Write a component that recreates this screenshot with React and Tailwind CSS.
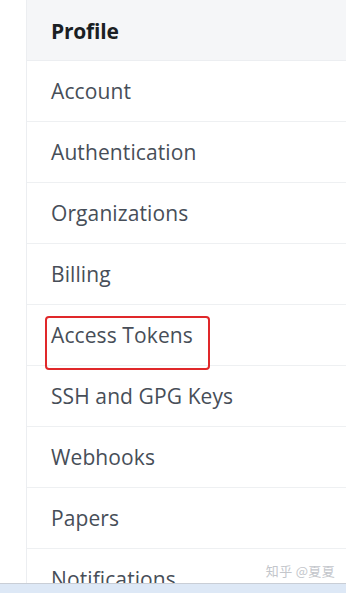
const items = [
  "Account",
  "Authentication",
  "Organizations",
  "Billing",
  "Access Tokens",
  "SSH and GPG Keys",
  "Webhooks",
  "Papers",
  "Notifications",
];

export default function App() {
  return (
    <div
      className="relative w-[346px] h-[593px] overflow-hidden bg-white flex flex-col"
      style={{ fontFamily: "'Open Sans', 'Noto Sans', sans-serif" }}
    >
      <div className="flex-1 overflow-hidden pl-[26px]">
        <div className="border-l border-[#eceef1] h-full">
          <div className="h-[61px] bg-[#f5f6f8] flex items-center pl-[24px] border-b border-[#eceef1]">
            <span className="text-[21px] font-bold text-[#1b1f24] tracking-[-0.2px] pt-[3px]">Profile</span>
          </div>
          {items.map((label) => (
            <div
              key={label}
              className="relative h-[61px] flex items-center pl-[24px] border-b border-[#eef0f2]"
            >
              <span className="text-[21px] text-[#474e58] pt-[2px] tracking-[0.1px]">{label}</span>
              {label === "Access Tokens" && (
                <div className="absolute left-[18px] top-[11px] w-[165px] h-[54px] border-[2.5px] border-[#e0282a] rounded-[4px] z-10" />
              )}
            </div>
          ))}
        </div>
      </div>
      <div className="h-[10px] border-t border-[#c9ced6] bg-[#dde8f6]" />
      <div
        className="absolute right-[11px] bottom-[13px] text-[13px] text-[#c3c6cb] tracking-wide"
        style={{ fontFamily: "'Noto Sans CJK SC', sans-serif" }}
      >
        知乎 @夏夏
      </div>
    </div>
  );
}
